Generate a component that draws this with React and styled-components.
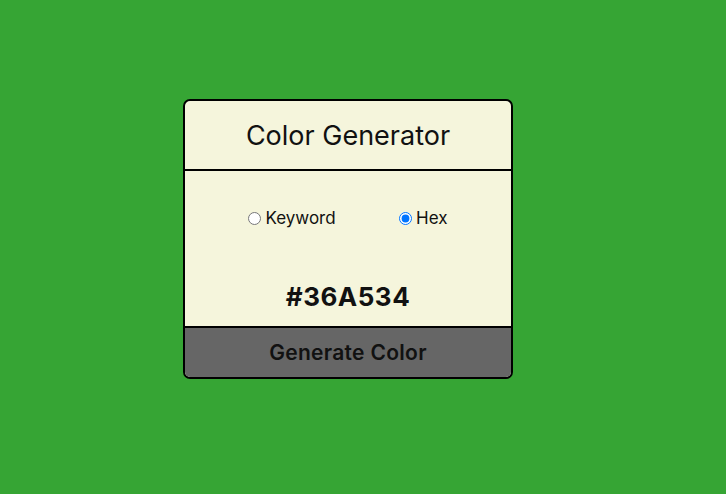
import React, { useState } from 'react';
import styled, { createGlobalStyle } from 'styled-components';

const GlobalStyle = createGlobalStyle`
  html, body {
    margin: 0;
    padding: 0;
    background: #36a534;
    font-family: Inter, 'Noto Sans', sans-serif;
  }
`;

const Page = styled.div`
  min-height: 494px;
  box-sizing: border-box;
  padding: 99px 0 0 183px;
`;

const Card = styled.div`
  width: 330px;
  box-sizing: border-box;
  border: 2px solid #000;
  border-radius: 7px;
  background: #f5f5dc;
  overflow: hidden;
`;

const Header = styled.div`
  height: 68px;
  display: flex;
  align-items: center;
  justify-content: center;
  border-bottom: 2px solid #000;
  font-size: 27px;
  color: #111;
`;

const Body = styled.div`
  height: 155px;
  display: flex;
  flex-direction: column;
  align-items: center;
  padding-top: 37px;
  box-sizing: border-box;
`;

const RadioRow = styled.div`
  width: 100%;
  height: 20px;
  display: flex;
  justify-content: space-evenly;
  align-items: center;
`;

const Option = styled.label`
  display: flex;
  align-items: center;
  font-size: 17px;
  color: #111;
  input {
    margin: 0 4px 0 0;
    width: 13px;
    height: 13px;
  }
`;

const ColorCode = styled.div`
  margin-top: 54px;
  font-size: 26px;
  line-height: 30px;
  font-weight: 700;
  color: #111;
  letter-spacing: 0.5px;
`;

const Button = styled.button`
  display: block;
  width: 100%;
  height: 51px;
  border: none;
  border-top: 2px solid #000;
  background: #666;
  color: #111;
  font-family: inherit;
  font-size: 21px;
  font-weight: 600;
  letter-spacing: 0.3px;
  cursor: pointer;
`;

export default function App() {
  const [mode, setMode] = useState('hex');
  return (
    <>
      <GlobalStyle />
      <Page>
        <Card>
          <Header>Color Generator</Header>
          <Body>
            <RadioRow>
              <Option>
                <input type="radio" name="mode" checked={mode === 'keyword'} onChange={() => setMode('keyword')} />
                Keyword
              </Option>
              <Option>
                <input type="radio" name="mode" checked={mode === 'hex'} onChange={() => setMode('hex')} />
                Hex
              </Option>
            </RadioRow>
            <ColorCode>#36A534</ColorCode>
          </Body>
          <Button>Generate Color</Button>
        </Card>
      </Page>
    </>
  );
}
